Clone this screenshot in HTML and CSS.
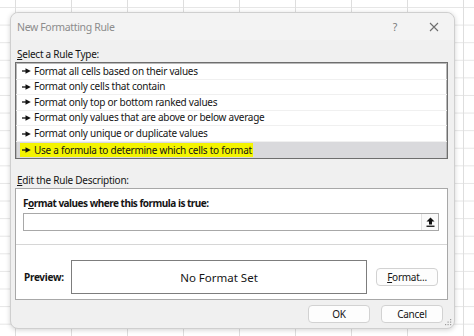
FILE: index.html
```html
<!DOCTYPE html>
<html>
<head>
<meta charset="utf-8">
<link rel="stylesheet" href="styles.css">
</head>
<body>
<div class="dialog">
  <div class="titlebar">
    <span class="title">New Formatting Rule</span>
    <span class="help">?</span>
    <span class="close"><svg width="10" height="10" viewBox="0 0 10 10"><path d="M1 1L9 9M9 1L1 9" stroke="#6e6e6e" stroke-width="1.1" fill="none"/></svg></span>
  </div>
  <div class="content">
    <div class="label first"><u>S</u>elect a Rule Type:</div>
    <ul class="rules">
      <li><svg class="arrow" width="9" height="6" viewBox="0 0 9 6"><path d="M0 3H4" stroke="#111" stroke-width="1.3"/><path d="M3.5 0.3L8.8 3L3.5 5.7Z" fill="#111"/></svg>Format all cells based on their values</li>
      <li><svg class="arrow" width="9" height="6" viewBox="0 0 9 6"><path d="M0 3H4" stroke="#111" stroke-width="1.3"/><path d="M3.5 0.3L8.8 3L3.5 5.7Z" fill="#111"/></svg>Format only cells that contain</li>
      <li><svg class="arrow" width="9" height="6" viewBox="0 0 9 6"><path d="M0 3H4" stroke="#111" stroke-width="1.3"/><path d="M3.5 0.3L8.8 3L3.5 5.7Z" fill="#111"/></svg>Format only top or bottom ranked values</li>
      <li><svg class="arrow" width="9" height="6" viewBox="0 0 9 6"><path d="M0 3H4" stroke="#111" stroke-width="1.3"/><path d="M3.5 0.3L8.8 3L3.5 5.7Z" fill="#111"/></svg>Format only values that are above or below average</li>
      <li><svg class="arrow" width="9" height="6" viewBox="0 0 9 6"><path d="M0 3H4" stroke="#111" stroke-width="1.3"/><path d="M3.5 0.3L8.8 3L3.5 5.7Z" fill="#111"/></svg>Format only unique or duplicate values</li>
      <li class="selected"><span class="hl"><svg class="arrow" width="9" height="6" viewBox="0 0 9 6"><path d="M0 3H4" stroke="#111" stroke-width="1.3"/><path d="M3.5 0.3L8.8 3L3.5 5.7Z" fill="#111"/></svg>Use a formula to determine which cells to format</span></li>
    </ul>
    <div class="label edit"><u>E</u>dit the Rule Description:</div>
    <div class="desc">
      <div class="desc-top">
        <div class="bold">F<u>o</u>rmat values where this formula is true:</div>
        <div class="input">
          <span class="field"></span>
          <span class="pick"><svg width="9" height="10" viewBox="0 0 9 10"><path d="M4.5 0.5L8.5 4.5H6V7.5H3V4.5H0.5Z" fill="#111"/><rect x="0.5" y="8.6" width="8" height="1.3" fill="#111"/></svg></span>
        </div>
      </div>
      <div class="desc-bottom">
        <span class="bold plabel">Preview:</span>
        <div class="preview">No Format Set</div>
        <span class="btn fmt"><u>F</u>ormat...</span>
      </div>
    </div>
    <div class="actions">
      <span class="btn">OK</span>
      <span class="btn">Cancel</span>
    </div>
  </div>
  <svg class="grip" width="7" height="7" viewBox="0 0 7 7"><g fill="#9a9a9a"><rect x="5" y="0" width="1.2" height="1.2"/><rect x="2.5" y="2.5" width="1.2" height="1.2"/><rect x="5" y="2.5" width="1.2" height="1.2"/><rect x="0" y="5" width="1.2" height="1.2"/><rect x="2.5" y="5" width="1.2" height="1.2"/><rect x="5" y="5" width="1.2" height="1.2"/></g></svg>
</div>
</body>
</html>
```

FILE: styles.css
```css
html, body {
  margin: 0;
  padding: 0;
}
body {
  width: 474px;
  height: 336px;
  overflow: hidden;
  background-color: #ffffff;
  background-image:
    linear-gradient(to right, #dedede 1px, transparent 1px),
    linear-gradient(to bottom, #e6e6e6 1px, transparent 1px);
  background-size: 56px 17.6px;
  background-position: 15px 7px;
  font-family: "Noto Sans", "Open Sans", sans-serif;
  font-size: 10px;
  letter-spacing: -0.25px;
  color: #151515;
}
.dialog {
  position: relative;
  box-sizing: border-box;
  margin: 12px 0 0 10px;
  width: 445px;
  height: 317px;
  background: #f0f0f0;
  border: 1px solid #cfcfcf;
  border-radius: 8px;
  box-shadow: 0 1px 5px rgba(0, 0, 0, 0.18);
}
.titlebar {
  height: 27px;
  display: flex;
  align-items: center;
  padding-left: 6px;
  background: #f3f3f3;
  border-radius: 8px 8px 0 0;
}
.title {
  flex: 1;
  font-size: 10.5px;
  letter-spacing: -0.35px;
  color: #8c8c8c;
}
.help {
  width: 12px;
  text-align: center;
  color: #7a7a7a;
  font-size: 10.5px;
  margin-right: 28px;
}
.close {
  display: flex;
  margin-right: 15px;
}
.content {
  padding: 0 6px 0 4px;
}
.label {
  line-height: 14px;
  padding-left: 2px;
}
.label.first {
  margin-top: 7px;
}
.label.edit {
  margin-top: 14px;
}
.rules {
  list-style: none;
  margin: 1px 0 0;
  padding: 1px 0 0;
  height: 97px;
  box-sizing: border-box;
  border: 1px solid #6e6e6e;
  box-shadow: inset 0 0 0 1px #b8b8b8;
  background: #fff;
}
.rules li {
  height: 15.6px;
  line-height: 15.6px;
  box-sizing: border-box;
  border-bottom: 1px solid #f0f0f0;
  padding-left: 6px;
  display: flex;
  align-items: center;
  white-space: nowrap;
}
.rules li.selected {
  background: #d9d9dc;
  border-bottom: none;
  margin: 0 1px;
  padding-left: 3px;
}
.arrow {
  margin: 0 3px 0 0;
  flex: none;
}
.hl .arrow {
  margin-left: 2px;
}
.hl {
  display: flex;
  align-items: center;
  background: #f4f400;
  padding-right: 1px;
  line-height: 14px;
}
.desc {
  margin-top: 1px;
  height: 112px;
  box-sizing: border-box;
  border: 1px solid #a8a8a8;
  background: #fff;
}
.desc-top {
  padding: 7px 8px 13px 7px;
  border-bottom: 1px solid #d6d6d6;
}
.bold {
  font-weight: bold;
  letter-spacing: -0.5px;
  line-height: 14px;
}
.input {
  margin-top: 3px;
  height: 18px;
  box-sizing: border-box;
  border: 1px solid #a8a8a8;
  display: flex;
  justify-content: flex-end;
}
.field {
  flex: 1;
}
.pick {
  width: 16px;
  display: flex;
  align-items: center;
  justify-content: center;
  border-left: 1px solid #e2e2e2;
  background: #fafafa;
}
.desc-bottom {
  display: flex;
  align-items: center;
  padding: 15px 0 5px 8px;
}
.plabel {
  width: 47px;
  letter-spacing: -0.3px;
}
.preview {
  width: 296px;
  height: 34px;
  box-sizing: border-box;
  border: 1px solid #7d7d7d;
  display: flex;
  align-items: center;
  justify-content: center;
  font-size: 11.5px;
  letter-spacing: 0;
}
.btn {
  box-sizing: border-box;
  width: 62px;
  height: 18px;
  display: flex;
  align-items: center;
  justify-content: center;
  background: #fdfdfd;
  border: 1px solid #d2d2d2;
  border-radius: 4px;
}
.fmt {
  margin-left: 9px;
}
.actions {
  display: flex;
  justify-content: flex-end;
  gap: 11px;
  margin-top: 5px;
  padding-right: 5px;
}
.grip {
  position: absolute;
  right: 2px;
  bottom: 2px;
}
```
